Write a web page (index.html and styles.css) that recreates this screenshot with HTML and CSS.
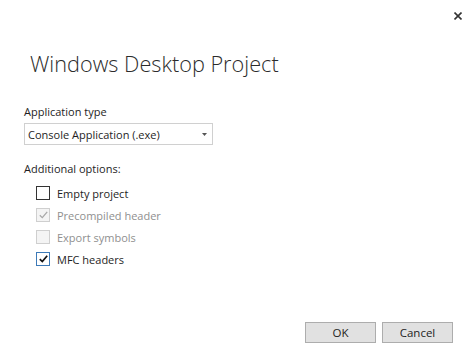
FILE: index.html
```html
<!DOCTYPE html>
<html lang="en">
<head>
  <meta charset="UTF-8">
  <meta name="viewport" content="width=device-width, initial-scale=1.0">
  <title>Windows Desktop Project</title>
  <link rel="stylesheet" href="styles.css">
</head>
<body>
  <div class="dialog">
    <div class="topBar">
      <button class="closeBtn" title="Close">
        <svg width="8" height="8" viewBox="0 0 8 8"><path d="M0.5 0.5 L7.5 7.5 M7.5 0.5 L0.5 7.5" stroke="#333" stroke-width="1.6"/></svg>
      </button>
    </div>

    <h1 class="title">Windows Desktop Project</h1>

    <div class="form">
      <label class="fieldLabel">Application type</label>
      <div class="select">
        <span>Console Application (.exe)</span>
        <svg width="5" height="3" viewBox="0 0 5 3"><path d="M0 0 H5 L2.5 3 Z" fill="#555"/></svg>
      </div>

      <div class="fieldLabel optionsLabel">Additional options:</div>
      <div class="options">
        <div class="option">
          <span class="check"></span>
          <span class="optText">Empty project</span>
        </div>
        <div class="option disabled">
          <span class="check">
            <svg width="9" height="8" viewBox="0 0 9 8"><path d="M0.8 4.2 L3.3 6.6 L8.2 0.8" fill="none" stroke="#a8a8a8" stroke-width="1.3"/></svg>
          </span>
          <span class="optText">Precompiled header</span>
        </div>
        <div class="option disabled">
          <span class="check"></span>
          <span class="optText">Export symbols</span>
        </div>
        <div class="option checked">
          <span class="check">
            <svg width="9" height="8" viewBox="0 0 9 8"><path d="M0.8 4.2 L3.3 6.6 L8.2 0.8" fill="none" stroke="#111" stroke-width="1.7"/></svg>
          </span>
          <span class="optText">MFC headers</span>
        </div>
      </div>
    </div>

    <div class="footer">
      <button class="btn">OK</button>
      <button class="btn">Cancel</button>
    </div>
  </div>
</body>
</html>
```

FILE: styles.css
```css
* {
  box-sizing: border-box;
}

body {
  margin: 0;
  background-color: #fff;
  font-family: "Open Sans", "Noto Sans", sans-serif;
  color: #1e1e1e;
}

.dialog {
  width: 474px;
  height: 364px;
  display: flex;
  flex-direction: column;
  background-color: #fff;
}

.topBar {
  display: flex;
  justify-content: flex-end;
  padding: 8px 8px 0 0;
}
.closeBtn {
  width: 16px;
  height: 16px;
  padding: 0;
  border: none;
  background: none;
  display: flex;
  align-items: center;
  justify-content: center;
}

.title {
  margin: 25px 0 0 30px;
  font-size: 21.7px;
  font-weight: 300;
  line-height: 30px;
  color: #2b2b2b;
}

.form {
  padding: 25px 0 0 24px;
}
.fieldLabel {
  display: block;
  font-size: 11px;
  line-height: 16px;
}

.select {
  width: 189px;
  height: 22px;
  margin-top: 3px;
  border: 1px solid #d0d0d0;
  display: flex;
  align-items: center;
  justify-content: space-between;
  padding: 0 5px 0 3px;
  font-size: 11px;
}

.optionsLabel {
  margin-top: 16px;
}

.options {
  padding: 9px 0 0 12px;
  display: flex;
  flex-direction: column;
  gap: 8px;
}
.option {
  height: 14px;
  display: flex;
  align-items: center;
  gap: 7px;
  font-size: 11px;
}
.check {
  width: 14px;
  height: 14px;
  border: 1px solid #333;
  background-color: #fff;
  display: flex;
  align-items: center;
  justify-content: center;
}
.option.disabled .check {
  border-color: #cfcfcf;
  background-color: #f4f4f4;
}
.option.disabled .optText {
  color: #8f8f8f;
}
.option.checked .check {
  border-color: #3d7ab8;
}

.footer {
  margin-top: auto;
  display: flex;
  justify-content: flex-end;
  gap: 6px;
  padding: 0 21px 21px 0;
}
.btn {
  width: 71px;
  height: 21px;
  padding: 0;
  border: 1px solid #adadad;
  background-color: #e1e1e1;
  font-family: "Open Sans", "Noto Sans", sans-serif;
  font-size: 11.5px;
  color: #1e1e1e;
}
```
